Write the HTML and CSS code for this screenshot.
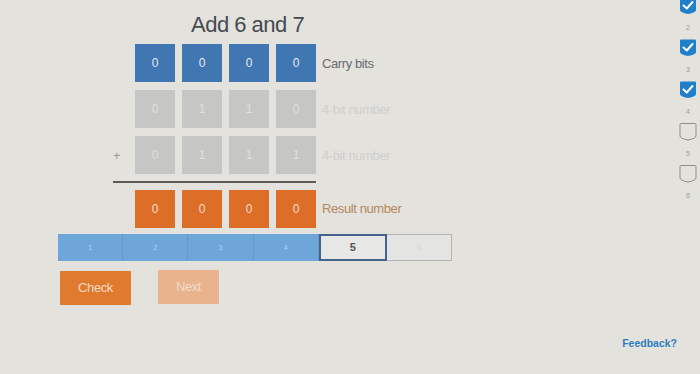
FILE: index.html
```html
<!DOCTYPE html>
<html>
<head>
<meta charset="utf-8">
<link rel="stylesheet" href="styles.css">
</head>
<body>
<div class="page">
  <div class="main">
    <h1 class="title">Add 6 and 7</h1>
    <div class="board">
      <div class="row">
        <span class="sign"></span>
        <span class="bit carry">0</span><span class="bit carry">0</span><span class="bit carry">0</span><span class="bit carry">0</span>
        <span class="label label-carry">Carry bits</span>
      </div>
      <div class="row">
        <span class="sign"></span>
        <span class="bit given">0</span><span class="bit given">1</span><span class="bit given">1</span><span class="bit given">0</span>
        <span class="label label-given">4-bit number</span>
      </div>
      <div class="row">
        <span class="sign">+</span>
        <span class="bit given">0</span><span class="bit given">1</span><span class="bit given">1</span><span class="bit given">1</span>
        <span class="label label-given">4-bit number</span>
      </div>
      <div class="rule"></div>
      <div class="row">
        <span class="sign"></span>
        <span class="bit result">0</span><span class="bit result">0</span><span class="bit result">0</span><span class="bit result">0</span>
        <span class="label label-result">Result number</span>
      </div>
    </div>
    <div class="progress">
      <span class="seg done">1</span>
      <span class="seg done">2</span>
      <span class="seg done">3</span>
      <span class="seg done">4</span>
      <span class="seg current">5</span>
      <span class="seg todo">6</span>
    </div>
    <div class="buttons">
      <button class="btn btn-check">Check</button>
      <button class="btn btn-next">Next</button>
    </div>
    <div class="feedback">Feedback?</div>
  </div>
  <div class="sidebar">
    <div class="item"><svg class="cb" viewBox="0 0 18 18"><path class="cb-fill" d="M1 1.5 Q1 0.5 2 0.5 H16 Q17 0.5 17 1.5 V13 Q17 15.5 9 17 Q1 15.5 1 13 Z"/><path class="cb-tick" d="M4.5 8.5 L7.8 11.5 L13.5 5"/></svg><span class="num">2</span></div>
    <div class="item"><svg class="cb" viewBox="0 0 18 18"><path class="cb-fill" d="M1 1.5 Q1 0.5 2 0.5 H16 Q17 0.5 17 1.5 V13 Q17 15.5 9 17 Q1 15.5 1 13 Z"/><path class="cb-tick" d="M4.5 8.5 L7.8 11.5 L13.5 5"/></svg><span class="num">3</span></div>
    <div class="item"><svg class="cb" viewBox="0 0 18 18"><path class="cb-fill" d="M1 1.5 Q1 0.5 2 0.5 H16 Q17 0.5 17 1.5 V13 Q17 15.5 9 17 Q1 15.5 1 13 Z"/><path class="cb-tick" d="M4.5 8.5 L7.8 11.5 L13.5 5"/></svg><span class="num">4</span></div>
    <div class="item"><svg class="cb" viewBox="0 0 18 18"><path class="cb-empty" d="M1 1.5 Q1 0.5 2 0.5 H16 Q17 0.5 17 1.5 V13 Q17 15.5 9 17 Q1 15.5 1 13 Z"/></svg><span class="num">5</span></div>
    <div class="item"><svg class="cb" viewBox="0 0 18 18"><path class="cb-empty" d="M1 1.5 Q1 0.5 2 0.5 H16 Q17 0.5 17 1.5 V13 Q17 15.5 9 17 Q1 15.5 1 13 Z"/></svg><span class="num">6</span></div>
  </div>
</div>
</body>
</html>
```

FILE: styles.css
```css
html, body {
  margin: 0;
  padding: 0;
}
body {
  background: #e4e2dd;
  font-family: "Liberation Sans", Arial, sans-serif;
  color: #444;
}
.page {
  width: 700px;
  height: 374px;
  display: flex;
  overflow: hidden;
}
.main {
  flex: 1;
  display: flex;
  flex-direction: column;
  padding: 12px 2px 0 58px;
}
.title {
  margin: 0 0 6px 133px;
  font-size: 22px;
  line-height: 26px;
  font-weight: normal;
  color: #454a50;
  letter-spacing: -0.5px;
}
.board {
  margin-left: 55px;
  display: flex;
  flex-direction: column;
  gap: 8px;
}
.row {
  display: flex;
  align-items: center;
  gap: 7px;
  height: 38px;
}
.sign {
  width: 15px;
  font-size: 13px;
  color: #999;
  text-align: left;
}
.bit {
  width: 40px;
  height: 38px;
  display: flex;
  align-items: center;
  justify-content: center;
  font-size: 12px;
}
.carry {
  background: #4076b2;
  color: #e3ecf5;
}
.given {
  background: #c6c6c4;
  color: #e0e0de;
}
.result {
  background: #dc6e27;
  color: #f6dcc8;
}
.label {
  margin-left: -1px;
  font-size: 13px;
  letter-spacing: -0.4px;
}
.label-carry { color: #676b70; }
.label-given { color: #cfcfcd; }
.label-result { color: #b5875f; }
.rule {
  width: 203px;
  height: 1.5px;
  background: #5a5a5a;
  margin: -1px 0 -1px;
}
.progress {
  display: flex;
  width: 394px;
  height: 27px;
  margin-top: 6px;
}
.seg {
  flex: 1;
  display: flex;
  align-items: center;
  justify-content: center;
  font-size: 7px;
  box-sizing: border-box;
}
.done {
  background: #6ea6d9;
  color: #b8d4ee;
  border-right: 1px solid #6499cb;
}
.current {
  background: #e7e7e5;
  border: 2px solid #44638c;
  color: #555;
  font-size: 11px;
  font-weight: bold;
}
.todo {
  background: #e4e4e2;
  border: 1px solid #b4b4b2;
  border-left: none;
  color: #d6d6d4;
}
.buttons {
  display: flex;
  align-items: flex-start;
  gap: 27px;
  margin-top: 9px;
  padding-left: 2px;
}
.btn {
  border: none;
  font-family: "Liberation Sans", Arial, sans-serif;
  font-size: 13px;
  letter-spacing: -0.4px;
  padding: 0;
}
.btn-check {
  width: 71px;
  height: 34px;
  margin-top: 1px;
  background: #e07a2f;
  color: #f7d9c3;
}
.btn-next {
  width: 61px;
  height: 34px;
  background: #e8b38d;
  color: #f3dbc9;
}
.feedback {
  align-self: flex-end;
  margin-top: 32px;
  margin-right: 0;
  font-size: 10.5px;
  font-weight: bold;
  color: #2f7dc1;
}
.sidebar {
  width: 18px;
  margin-right: 3px;
  margin-top: -3px;
  display: flex;
  flex-direction: column;
}
.item {
  display: flex;
  flex-direction: column;
  align-items: center;
  height: 42px;
}
.cb {
  width: 18px;
  height: 18px;
  display: block;
}
.cb-fill {
  fill: #1f7fca;
}
.cb-tick {
  fill: none;
  stroke: #fff;
  stroke-width: 2;
  stroke-linecap: round;
  stroke-linejoin: round;
}
.cb-empty {
  fill: none;
  stroke: #8d8d8b;
  stroke-width: 1;
}
.num {
  margin-top: 8px;
  font-size: 7px;
  line-height: 10px;
  color: #9a9a98;
}
```
